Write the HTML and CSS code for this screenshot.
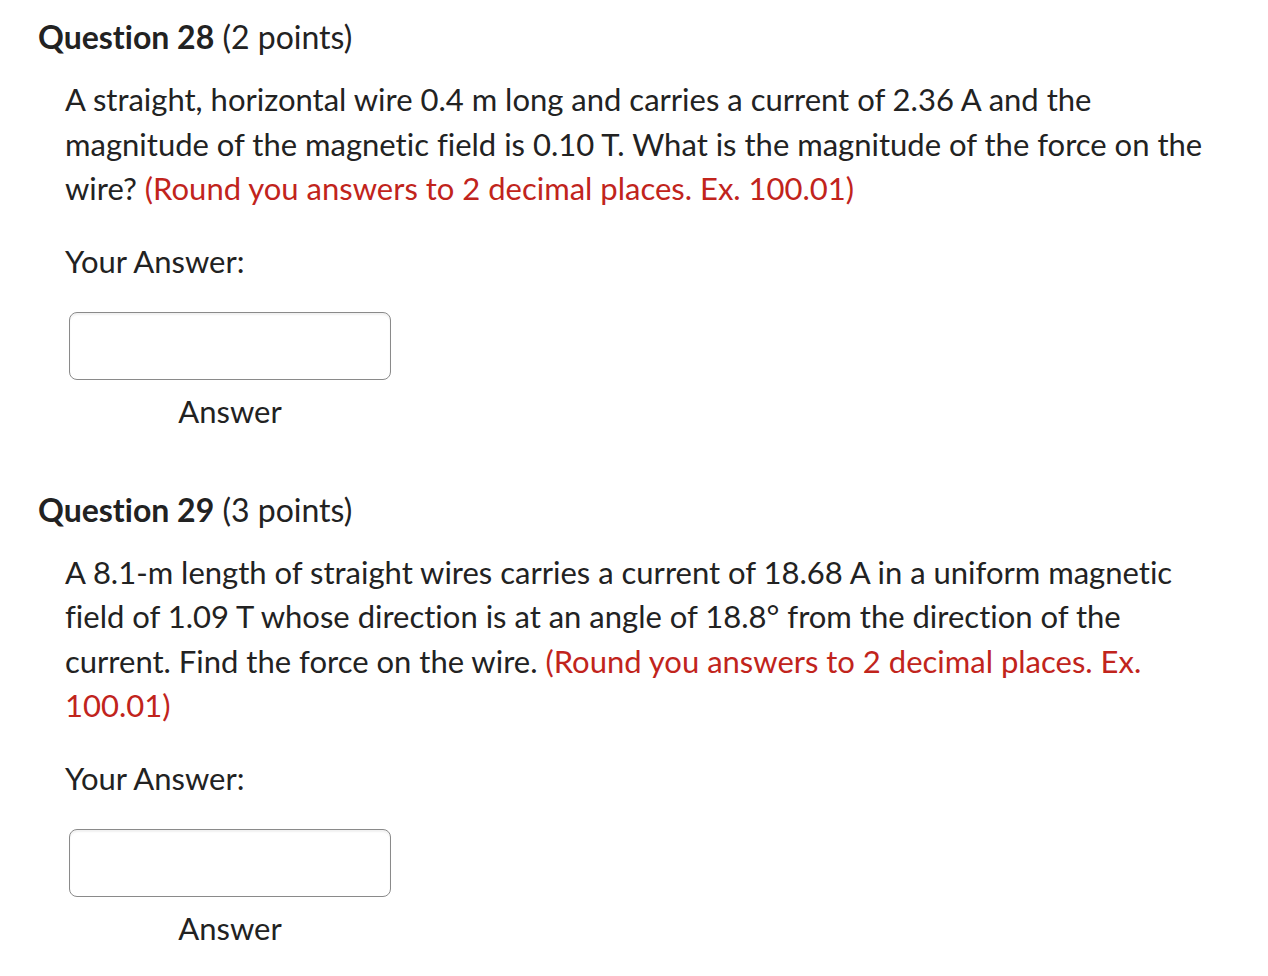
FILE: index.html
```html
<!DOCTYPE html>
<html>
<head>
<meta charset="utf-8">
<link rel="stylesheet" href="styles.css">
</head>
<body>
<div class="page">
  <section class="question">
    <h2 class="q-title"><strong>Question 28</strong> (2 points)</h2>
    <div class="q-body">
      <p class="q-text">A straight, horizontal wire 0.4 m long and carries a current of 2.36 A and the magnitude of the magnetic field is 0.10 T. What is the magnitude of the force on the wire? <span class="hint">(Round you answers to 2 decimal places. Ex. 100.01)</span></p>
      <p class="your">Your Answer:</p>
      <div class="answer">
        <input class="answer-input" type="text">
        <div class="answer-label">Answer</div>
      </div>
    </div>
  </section>
  <section class="question">
    <h2 class="q-title"><strong>Question 29</strong> (3 points)</h2>
    <div class="q-body">
      <p class="q-text">A 8.1-m length of straight wires carries a current of 18.68 A in a uniform magnetic field of 1.09 T whose direction is at an angle of 18.8° from the direction of the current. Find the force on the wire. <span class="hint">(Round you answers to 2 decimal places. Ex. 100.01)</span></p>
      <p class="your">Your Answer:</p>
      <div class="answer">
        <input class="answer-input" type="text">
        <div class="answer-label">Answer</div>
      </div>
    </div>
  </section>
</div>
</body>
</html>
```

FILE: styles.css
```css
html, body {
  margin: 0;
  padding: 0;
  background: #ffffff;
}
body {
  font-family: Lato, "Liberation Sans", sans-serif;
  color: #222222;
  font-size: 31px;
  font-variant-ligatures: none;
}
.page {
  padding: 14px 0 0 38px;
}
.question {
  margin-bottom: 54px;
}
.q-title {
  margin: 0;
  font-size: 32px;
  font-weight: 400;
  line-height: 46px;
}
.q-title strong {
  font-weight: 700;
}
.q-body {
  padding-left: 27px;
  width: 1152px;
}
.q-text {
  margin: 17px 0 0 0;
  line-height: 44.5px;
}
.hint {
  color: #c1241c;
}
.your {
  margin: 28px 0 0 0;
  line-height: 44px;
}
.answer {
  width: 330px;
  display: flex;
  flex-direction: column;
  align-items: center;
  margin-top: 29px;
}
.answer-input {
  box-sizing: border-box;
  width: 322px;
  height: 68px;
  margin: 0 0 0 4px;
  border: 1px solid #8a8a8a;
  border-radius: 8px;
  box-shadow: inset 0 2px 2px rgba(0,0,0,0.06);
  background: #fff;
  font-size: 28px;
  font-family: inherit;
  align-self: flex-start;
}
.answer-label {
  margin-top: 9px;
  line-height: 44px;
}
```
